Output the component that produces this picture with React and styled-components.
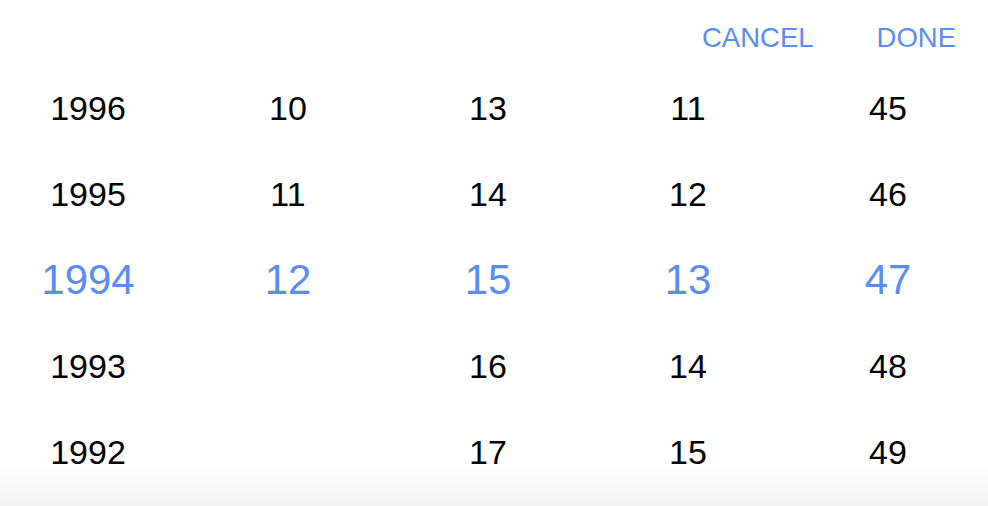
import React from "react";
import styled, { createGlobalStyle } from "styled-components";

const Global = createGlobalStyle`
  html, body { margin: 0; padding: 0; }
  body {
    width: 988px;
    height: 506px;
    overflow: hidden;
    font-family: "Liberation Sans", Arial, sans-serif;
    background: #fff;
  }
`;

const Sheet = styled.div`
  width: 988px;
  height: 506px;
  display: flex;
  flex-direction: column;
  background: linear-gradient(to bottom, #ffffff 0px, #ffffff 466px, #f2f2f2 506px);
`;

const Toolbar = styled.div`
  height: 65px;
  display: flex;
  justify-content: flex-end;
  align-items: center;
  padding: 11px 32px 0 0;
  gap: 63px;
  box-sizing: border-box;
`;

const ActionButton = styled.button`
  border: none;
  background: none;
  padding: 0;
  margin: 0;
  font-family: "Liberation Sans", Arial, sans-serif;
  font-size: 27.5px;
  color: #5b8def;
  cursor: pointer;
`;

const Wheels = styled.div`
  display: grid;
  grid-template-columns: repeat(5, 176px);
  column-gap: 24px;
`;

const Wheel = styled.div`
  display: flex;
  flex-direction: column;
`;

const Cell = styled.div`
  height: 86px;
  line-height: 86px;
  text-align: center;
  font-size: ${(p) => (p.$selected ? "42px" : "34px")};
  color: ${(p) => (p.$selected ? "#5b8def" : "#000")};
`;

const columns = [
  ["1996", "1995", "1994", "1993", "1992"],
  ["10", "11", "12", "", ""],
  ["13", "14", "15", "16", "17"],
  ["11", "12", "13", "14", "15"],
  ["45", "46", "47", "48", "49"],
];

export default function App() {
  return (
    <>
      <Global />
      <Sheet>
        <Toolbar>
          <ActionButton>CANCEL</ActionButton>
          <ActionButton>DONE</ActionButton>
        </Toolbar>
        <Wheels>
          {columns.map((col, ci) => (
            <Wheel key={ci}>
              {col.map((v, ri) => (
                <Cell key={ri} $selected={ri === 2}>
                  {v}
                </Cell>
              ))}
            </Wheel>
          ))}
        </Wheels>
      </Sheet>
    </>
  );
}
